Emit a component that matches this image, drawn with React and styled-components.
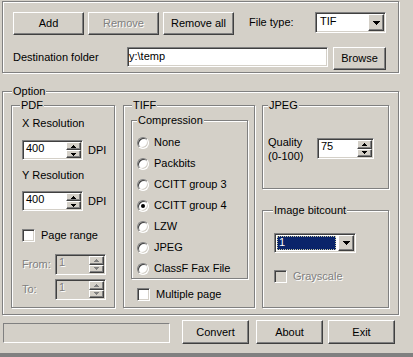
import React from 'react';
import styled, { createGlobalStyle, css } from 'styled-components';

const GlobalStyle = createGlobalStyle`
  html, body { margin: 0; padding: 0; background: #d4d0c8; }
  body {
    font-family: "Liberation Sans", Arial, sans-serif;
    font-size: 11px;
    color: #000;
    -webkit-font-smoothing: none;
  }
`;

const raised = css`
  border: 1px solid;
  border-color: #fff #404040 #404040 #fff;
  box-shadow: inset -1px -1px 0 #808080, inset 1px 1px 0 #d4d0c8;
  background: #d4d0c8;
`;

const sunken = css`
  border: 1px solid;
  border-color: #808080 #fff #fff #808080;
  box-shadow: inset 1px 1px 0 #404040, inset -1px -1px 0 #d4d0c8;
`;

const etched = css`
  border: 1px solid #808080;
  box-shadow: 1px 1px 0 #fff, inset 1px 1px 0 #fff;
`;

const disabledText = css`
  color: #808080;
  text-shadow: 1px 1px 0 #fff;
`;

const Window = styled.div`
  width: 413px;
  height: 357px;
  display: flex;
  flex-direction: column;
  overflow: hidden;
  background: #d4d0c8;
`;

const Group = styled.div`
  position: relative;
  box-sizing: border-box;
  ${etched};
  width: ${(p) => p.$w}px;
  height: ${(p) => p.$h}px;
  flex-shrink: 0;
`;

const Legend = styled.span`
  position: absolute;
  top: -7px;
  left: ${(p) => p.$left}px;
  padding: 0 1px;
  background: #d4d0c8;
  line-height: 13px;
  white-space: nowrap;
`;

const TopGroup = styled(Group)`
  margin: 1px 0 0 2px;
  padding: 10px 0 0 10px;
`;

const ButtonRow = styled.div`
  display: flex;
  align-items: flex-start;
  gap: 4px;
`;

const Button = styled.button`
  box-sizing: border-box;
  ${raised};
  width: ${(p) => p.$w}px;
  height: ${(p) => p.$h || 23}px;
  margin: 0;
  padding: 0;
  font: inherit;
  line-height: 13px;
  color: #000;
  flex-shrink: 0;
  &:disabled {
    ${disabledText};
  }
`;

const FileTypeLabel = styled.span`
  width: 62px;
  margin-left: 11px;
  line-height: 21px;
`;

const Combo = styled.div`
  box-sizing: border-box;
  ${sunken};
  width: ${(p) => p.$w}px;
  height: ${(p) => p.$h}px;
  background: #fff;
  display: flex;
  padding: 1px;
  flex-shrink: 0;
`;

const ComboText = styled.div`
  flex: 1;
  padding: 2px 0 0 3px;
  line-height: 11px;
`;

const ComboHighlight = styled.div`
  flex: 1;
  margin: 1px 2px 1px 1px;
  background: #0a246a;
  color: #fff;
  outline: 1px dotted #c8c8a0;
  outline-offset: -1px;
  padding: 1px 0 0 2px;
  line-height: 11px;
`;

const DropButton = styled.div`
  box-sizing: border-box;
  ${raised};
  width: 16px;
  display: flex;
  align-items: center;
  justify-content: center;
`;

const FolderRow = styled.div`
  display: flex;
  align-items: flex-start;
  margin-top: 12px;
`;

const FolderLabel = styled.span`
  width: 114px;
  line-height: 20px;
`;

const TextField = styled.div`
  box-sizing: border-box;
  ${sunken};
  width: 201px;
  height: 20px;
  background: #fff;
  padding: 2px 0 0 1px;
  line-height: 13px;
  margin-right: 5px;
`;

const OptionGroup = styled(Group)`
  margin: 18px 0 0 2px;
  padding: 13px 0 0 8px;
  display: flex;
  align-items: flex-start;
`;

const PdfGroup = styled(Group)`
  padding-left: 10px;
  display: flex;
  flex-direction: column;
`;

const TiffGroup = styled(Group)`
  margin-left: 8px;
  padding-left: 7px;
  display: flex;
  flex-direction: column;
`;

const RightColumn = styled.div`
  margin-left: 7px;
  display: flex;
  flex-direction: column;
  gap: 21px;
`;

const JpegGroup = styled(Group)`
  padding-left: 5px;
`;

const BitGroup = styled(Group)`
  padding-left: 11px;
  display: flex;
  flex-direction: column;
  align-items: flex-start;
`;

const CompressionGroup = styled(Group)`
  margin-top: 14px;
  padding: 11px 0 0 5px;
  display: flex;
  flex-direction: column;
`;

const FieldLabel = styled.div`
  line-height: 13px;
  margin-top: ${(p) => p.$mt}px;
  ${(p) => p.$disabled && disabledText};
`;

const SpinRow = styled.div`
  display: flex;
  align-items: center;
  margin-top: ${(p) => p.$mt}px;
  height: ${(p) => p.$h || 20}px;
`;

const SpinBox = styled.div`
  box-sizing: border-box;
  ${sunken};
  width: ${(p) => p.$w}px;
  height: ${(p) => p.$h}px;
  display: flex;
  padding: 1px;
  background: ${(p) => (p.$disabled ? '#d4d0c8' : '#fff')};
  flex-shrink: 0;
`;

const SpinText = styled.div`
  flex: 1;
  padding: 1px 0 0 2px;
  line-height: 11px;
  ${(p) => p.$disabled && disabledText};
`;

const SpinButtons = styled.div`
  display: flex;
  flex-direction: column;
  width: 15px;
`;

const SpinButton = styled.div`
  flex: 1;
  box-sizing: border-box;
  ${raised};
  display: flex;
  align-items: center;
  justify-content: center;
`;

const UnitLabel = styled.span`
  margin-left: 5px;
  line-height: 13px;
`;

const CheckRow = styled.div`
  display: flex;
  align-items: center;
  margin-top: ${(p) => p.$mt}px;
  margin-left: ${(p) => p.$ml || 0}px;
  height: 13px;
`;

const CheckBox = styled.span`
  box-sizing: border-box;
  width: 13px;
  height: 13px;
  ${sunken};
  background: ${(p) => (p.$disabled ? '#d4d0c8' : '#fff')};
  flex-shrink: 0;
`;

const CheckLabel = styled.span`
  margin-left: 6px;
  line-height: 13px;
  ${(p) => p.$disabled && disabledText};
`;

const RangeLabel = styled.span`
  width: 33px;
  line-height: 13px;
  ${disabledText};
`;

const RadioRow = styled.div`
  display: flex;
  align-items: center;
  height: 21px;
  flex-shrink: 0;
`;

const Radio = styled.span`
  box-sizing: border-box;
  width: 12px;
  height: 12px;
  border-radius: 50%;
  border: 1px solid;
  border-color: #808080 #fff #fff #808080;
  box-shadow: inset 1px 1px 0 #404040, inset -1px -1px 0 #d4d0c8;
  background: #fff;
  display: flex;
  align-items: center;
  justify-content: center;
  flex-shrink: 0;
  &::after {
    content: '';
    width: 4px;
    height: 4px;
    border-radius: 50%;
    background: #000;
    display: ${(p) => (p.$checked ? 'block' : 'none')};
  }
`;

const RadioLabel = styled.span`
  margin-left: 5px;
  line-height: 13px;
`;

const QualityRow = styled.div`
  display: flex;
  align-items: center;
  margin-top: 32px;
  height: 21px;
`;

const QualityLabel = styled.span`
  width: 49px;
  line-height: 14px;
`;

const BitCombo = styled(Combo)`
  margin-top: 22px;
`;

const BottomRow = styled.div`
  display: flex;
  align-items: flex-start;
  margin-top: 5px;
  height: 24px;
`;

const StatusPanel = styled.div`
  box-sizing: border-box;
  width: 167px;
  height: 20px;
  margin: 3px 12px 0 3px;
  border: 1px solid;
  border-color: #808080 #fff #fff #808080;
`;

const BottomButton = styled(Button)`
  margin-left: ${(p) => p.$ml || 0}px;
`;

const BottomEdge = styled.div`
  margin-top: auto;
  height: 4px;
  background: #808080;
`;

const Triangle = ({ up, disabled, big }) => {
  const fill = disabled ? '#808080' : '#000';
  if (big) {
    return (
      <svg width="7" height="4" viewBox="0 0 7 4" shapeRendering="crispEdges">
        <path d="M0 0h7v1h-1v1h-1v1h-1v1h-1v-1h-1v-1h-1v-1h-1z" fill={fill} />
      </svg>
    );
  }
  return (
    <svg width="5" height="3" viewBox="0 0 5 3" shapeRendering="crispEdges" style={{ transform: up ? 'none' : 'rotate(180deg)' }}>
      {disabled && <path d="M3 1h1v1h1v1h-1zM1 3h4v0z" fill="#fff" />}
      <path d="M2 0h1v1h1v1h1v1h-5v-1h1v-1h1z" fill={fill} />
    </svg>
  );
};

const Spin = ({ value, w = 61, h = 20, disabled }) => (
  <SpinBox $w={w} $h={h} $disabled={disabled}>
    <SpinText $disabled={disabled}>{value}</SpinText>
    <SpinButtons>
      <SpinButton><Triangle up disabled={disabled} /></SpinButton>
      <SpinButton><Triangle disabled={disabled} /></SpinButton>
    </SpinButtons>
  </SpinBox>
);

const compressions = [
  { label: 'None' },
  { label: 'Packbits' },
  { label: 'CCITT group 3' },
  { label: 'CCITT group 4', checked: true },
  { label: 'LZW' },
  { label: 'JPEG' },
  { label: 'ClassF Fax File' },
];

export default function App() {
  return (
    <>
      <GlobalStyle />
      <Window>
        <TopGroup $w={397} $h={72}>
          <ButtonRow>
            <Button $w={71}>Add</Button>
            <Button $w={71} disabled>Remove</Button>
            <Button $w={71}>Remove all</Button>
            <FileTypeLabel>File type:</FileTypeLabel>
            <Combo $w={71} $h={21}>
              <ComboText>TIF</ComboText>
              <DropButton><Triangle big /></DropButton>
            </Combo>
          </ButtonRow>
          <FolderRow>
            <FolderLabel>Destination folder</FolderLabel>
            <TextField>y:\temp</TextField>
            <Button $w={53}>Browse</Button>
          </FolderRow>
        </TopGroup>

        <OptionGroup $w={397} $h={224}>
          <Legend $left={9}>Option</Legend>

          <PdfGroup $w={104} $h={203}>
            <Legend $left={8}>PDF</Legend>
            <FieldLabel $mt={11}>X Resolution</FieldLabel>
            <SpinRow $mt={10}>
              <Spin value="400" />
              <UnitLabel>DPI</UnitLabel>
            </SpinRow>
            <FieldLabel $mt={9}>Y Resolution</FieldLabel>
            <SpinRow $mt={9}>
              <Spin value="400" />
              <UnitLabel>DPI</UnitLabel>
            </SpinRow>
            <CheckRow $mt={18}>
              <CheckBox />
              <CheckLabel>Page range</CheckLabel>
            </CheckRow>
            <SpinRow $mt={12} $h={21}>
              <RangeLabel>From:</RangeLabel>
              <Spin value="1" w={51} h={21} disabled />
            </SpinRow>
            <SpinRow $mt={4} $h={21}>
              <RangeLabel>To:</RangeLabel>
              <Spin value="1" w={51} h={21} disabled />
            </SpinRow>
          </PdfGroup>

          <TiffGroup $w={132} $h={203}>
            <Legend $left={8}>TIFF</Legend>
            <CompressionGroup $w={117} $h={159}>
              <Legend $left={5}>Compression</Legend>
              {compressions.map((c) => (
                <RadioRow key={c.label}>
                  <Radio $checked={c.checked} />
                  <RadioLabel>{c.label}</RadioLabel>
                </RadioRow>
              ))}
            </CompressionGroup>
            <CheckRow $mt={9} $ml={6}>
              <CheckBox />
              <CheckLabel>Multiple page</CheckLabel>
            </CheckRow>
          </TiffGroup>

          <RightColumn>
            <JpegGroup $w={127} $h={84}>
              <Legend $left={5}>JPEG</Legend>
              <QualityRow>
                <QualityLabel>Quality<br />(0-100)</QualityLabel>
                <Spin value="75" w={57} h={21} />
              </QualityRow>
            </JpegGroup>
            <BitGroup $w={127} $h={98}>
              <Legend $left={10}>Image bitcount</Legend>
              <BitCombo $w={82} $h={20}>
                <ComboHighlight>1</ComboHighlight>
                <DropButton><Triangle big /></DropButton>
              </BitCombo>
              <CheckRow $mt={17}>
                <CheckBox $disabled />
                <CheckLabel $disabled>Grayscale</CheckLabel>
              </CheckRow>
            </BitGroup>
          </RightColumn>
        </OptionGroup>

        <BottomRow>
          <StatusPanel />
          <BottomButton $w={67} $h={24}>Convert</BottomButton>
          <BottomButton $w={67} $h={24} $ml={7}>About</BottomButton>
          <BottomButton $w={67} $h={24} $ml={5}>Exit</BottomButton>
        </BottomRow>
        <BottomEdge />
      </Window>
    </>
  );
}
